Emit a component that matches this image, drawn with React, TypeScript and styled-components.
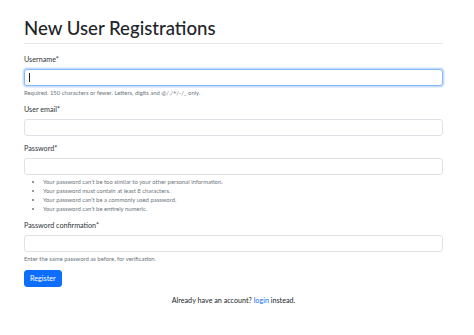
import React from "react";
import styled, { createGlobalStyle } from "styled-components";

const GlobalStyle = createGlobalStyle`
  html, body {
    margin: 0;
    padding: 0;
    background: #ffffff;
  }
  body {
    font-family: Lato, "Noto Sans", sans-serif;
    color: #212529;
    font-size: 7.2px;
  }
  * {
    box-sizing: border-box;
  }
`;

const Page = styled.div`
  width: 474px;
  height: 335px;
  padding: 0 31px 0 24px;
`;

const Title = styled.h1`
  margin: 0;
  padding-top: 17px;
  font-size: 18.6px;
  line-height: 23px;
  font-weight: 500;
  color: #212529;
`;

const Divider = styled.hr`
  margin: 3px 0 10px;
  border: 0;
  border-top: 1px solid #e4e6e8;
`;

const Field = styled.div`
  margin-bottom: 7px;
`;

const Label = styled.label`
  display: block;
  font-size: 7.2px;
  line-height: 11px;
  margin-bottom: 4px;
  color: #2f3439;
`;

const InputWrap = styled.div`
  position: relative;
`;

const Input = styled.input<{ $focused?: boolean }>`
  display: block;
  width: 100%;
  height: 17px;
  padding: 0 6px;
  font-family: inherit;
  font-size: 7.2px;
  color: #212529;
  background: #fff;
  border: 1px solid ${(p) => (p.$focused ? "#86b7fe" : "#dee2e6")};
  border-radius: 3px;
  outline: none;
  box-shadow: ${(p) => (p.$focused ? "0 0 0 1.5px rgba(13, 110, 253, 0.22)" : "none")};
`;

const Caret = styled.span`
  position: absolute;
  left: 5px;
  top: 4px;
  width: 1px;
  height: 9px;
  background: #212529;
`;

const Help = styled.div<{ $gap?: number }>`
  margin-top: 2px;
  margin-bottom: ${(p) => p.$gap ?? 0}px;
  font-size: 5.9px;
  line-height: 9px;
  color: #6c757d;
`;

const Rules = styled.ul`
  margin: 2px 0 4px;
  padding-left: 19px;
  font-size: 5.9px;
  line-height: 9px;
  color: #6c757d;
`;

const Button = styled.button`
  display: block;
  margin-top: 3px;
  height: 17px;
  padding: 0 5px;
  font-family: inherit;
  font-size: 7.2px;
  color: #fff;
  background: #0d6efd;
  border: 1px solid #0d6efd;
  border-radius: 3px;
`;

const Footer = styled.p`
  margin: 8px 0 0;
  text-align: center;
  font-size: 7.2px;
  line-height: 11px;
`;

const Link = styled.a`
  color: #0d6efd;
  text-decoration: none;
`;

export default function App() {
  return (
    <>
      <GlobalStyle />
      <Page>
        <Title>New User Registrations</Title>
        <Divider />
        <form onSubmit={(e) => e.preventDefault()}>
          <Field>
            <Label>Username*</Label>
            <InputWrap>
              <Input $focused type="text" />
              <Caret />
            </InputWrap>
            <Help $gap={2}>Required. 150 characters or fewer. Letters, digits and @/./+/-/_ only.</Help>
          </Field>
          <Field>
            <Label>User email*</Label>
            <Input type="email" />
          </Field>
          <Field>
            <Label>Password*</Label>
            <Input type="password" />
            <Rules>
              <li>Your password can’t be too similar to your other personal information.</li>
              <li>Your password must contain at least 8 characters.</li>
              <li>Your password can’t be a commonly used password.</li>
              <li>Your password can’t be entirely numeric.</li>
            </Rules>
          </Field>
          <Field>
            <Label>Password confirmation*</Label>
            <Input type="password" />
            <Help>Enter the same password as before, for verification.</Help>
          </Field>
          <Button type="submit">Register</Button>
        </form>
        <Footer>
          Already have an account? <Link href="#">login</Link> instead.
        </Footer>
      </Page>
    </>
  );
}
